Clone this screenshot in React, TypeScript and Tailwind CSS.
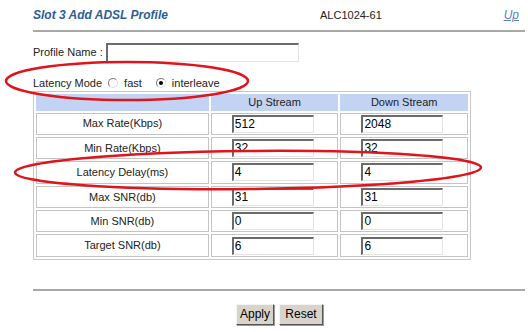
import React from "react";

const rows = [
  { label: "Max Rate(Kbps)", up: "512", down: "2048" },
  { label: "Min Rate(Kbps)", up: "32", down: "32" },
  { label: "Latency Delay(ms)", up: "4", down: "4" },
  { label: "Max SNR(db)", up: "31", down: "31" },
  { label: "Min SNR(db)", up: "0", down: "0" },
  { label: "Target SNR(db)", up: "6", down: "6" },
];

function TextBox({ value, className }: { value: string; className?: string }) {
  return (
    <div
      className={`h-[18px] border-t-2 border-l-2 border-b border-r border-t-[#6b6b6b] border-l-[#6b6b6b] border-b-[#e4e4e4] border-r-[#e4e4e4] bg-white pl-[1px] text-[12px] leading-[14px] text-black ${className ?? ""}`}
    >
      {value}
    </div>
  );
}

function Radio({ checked }: { checked?: boolean }) {
  return (
    <span className="relative inline-flex h-[10px] w-[10px] items-center justify-center rounded-full border border-t-[#777] border-l-[#777] border-b-[#ddd] border-r-[#ddd] bg-white">
      {checked && <span className="h-[4px] w-[4px] rounded-full bg-black" />}
    </span>
  );
}

function Button({ children, w }: { children: React.ReactNode; w: string }) {
  return (
    <div
      className={`flex h-[21px] ${w} items-center justify-center border border-t-[#f4f4f4] border-l-[#f4f4f4] border-b-[#555] border-r-[#555] bg-[#d8d4cc] text-[12px] text-black shadow-[1px_1px_0_#999]`}
    >
      {children}
    </div>
  );
}

export default function App() {
  return (
    <div
      className="relative h-[332px] w-[528px] overflow-hidden bg-white text-[11px] text-[#222]"
      style={{ fontFamily: '"Liberation Sans", Arial, sans-serif' }}
    >
      <div className="pl-[33px] pr-[3px] pt-[7px]">
        <div className="flex h-[16px] items-center">
          <span className="w-[287px] text-[12px] font-bold italic text-[#2c5d96]">Slot 3 Add ADSL Profile</span>
          <span className="text-[11px] text-[#222]">ALC1024-61</span>
          <span className="ml-auto mr-[6px] text-[12px] italic text-[#5b7fc0] underline">Up</span>
        </div>
        <div className="mt-[7px] h-[2px] bg-[#a8a8a8]" />

        <div className="mt-[11px] flex h-[18px] items-center gap-[3px]">
          <span>Profile Name :</span>
          <div className="h-[19px] w-[193px] border-t-2 border-l-2 border-b border-r border-t-[#6b6b6b] border-l-[#6b6b6b] border-b-[#e4e4e4] border-r-[#e4e4e4] bg-white" />
        </div>

        <div className="mt-[14px] flex h-[16px] items-center">
          <span>Latency Mode</span>
          <span className="ml-[6px] flex"><Radio /></span>
          <span className="ml-[6px]">fast</span>
          <span className="ml-[14px] flex"><Radio checked /></span>
          <span className="ml-[6px]">interleave</span>
        </div>

        <table className="mt-0 w-[438px] border-separate border-spacing-[2px] border border-[#c8c8c8] text-[11px]">
          <thead>
            <tr className="h-[16px]">
              <th className="w-[172px] bg-[#c3d3f4] p-0 font-normal" />
              <th className="w-[127px] bg-[#c3d3f4] p-0 font-normal">Up Stream</th>
              <th className="w-[127px] bg-[#c3d3f4] p-0 font-normal">Down Stream</th>
            </tr>
          </thead>
          <tbody>
            {rows.map((r) => (
              <tr key={r.label} className="h-[22.4px]">
                <td className="border border-[#c4c4c4] p-0 text-center">{r.label}</td>
                <td className="border border-[#c4c4c4] p-0">
                  <TextBox value={r.up} className="ml-[20px] w-[82px]" />
                </td>
                <td className="border border-[#c4c4c4] p-0">
                  <TextBox value={r.down} className="ml-[20px] w-[82px]" />
                </td>
              </tr>
            ))}
          </tbody>
        </table>

        <div className="mt-[29px] h-[2px] bg-[#a8a8a8]" />

        <div className="ml-[203px] mt-[13px] flex gap-[5px]">
          <Button w="w-[38px]">Apply</Button>
          <Button w="w-[44px]">Reset</Button>
        </div>
      </div>

      <svg className="pointer-events-none absolute left-0 top-0" width="528" height="332">
        <ellipse cx="127" cy="81" rx="121" ry="19" fill="none" stroke="#e0141c" strokeWidth="2.5" />
        <ellipse cx="248" cy="170" rx="233" ry="19" fill="none" stroke="#e0141c" strokeWidth="2.5" transform="rotate(-0.6 248 170)" />
      </svg>
    </div>
  );
}
